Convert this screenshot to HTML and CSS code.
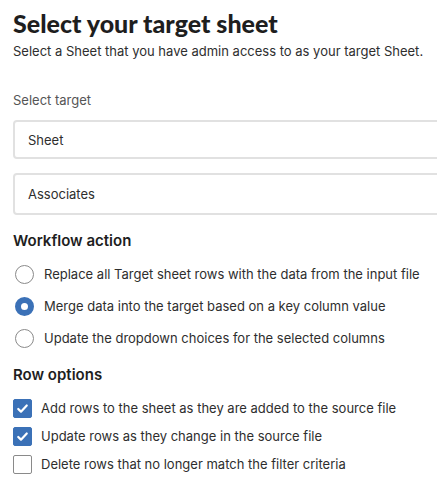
FILE: index.html
```html
<!DOCTYPE html>
<html lang="en">
<head>
    <meta charset="UTF-8">
    <meta name="viewport" content="width=device-width, initial-scale=1.0">
    <title>Select your target sheet</title>
    <link rel="stylesheet" href="styles.css">
</head>
<body>
    <div class="panel">
        <div class="panel-header">
            <h2>Select your target sheet</h2>
            <p>Select a Sheet that you have admin access to as your target Sheet.</p>
        </div>

        <div class="target-group">
            <label class="field-label">Select target</label>
            <div class="select-box">Sheet</div>
            <div class="select-box tall">Associates</div>
        </div>

        <div class="option-group">
            <h3>Workflow action</h3>
            <label class="radio-row">
                <span class="radio"></span>
                Replace all Target sheet rows with the data from the input file
            </label>
            <label class="radio-row">
                <span class="radio checked"></span>
                Merge data into the target based on a key column value
            </label>
            <label class="radio-row">
                <span class="radio"></span>
                Update the dropdown choices for the selected columns
            </label>
        </div>

        <div class="option-group rows">
            <h3>Row options</h3>
            <label class="check-row">
                <span class="checkbox checked">
                    <svg viewBox="0 0 20 20"><path d="M5 10.5l3.2 3.2L15 6.5" /></svg>
                </span>
                Add rows to the sheet as they are added to the source file
            </label>
            <label class="check-row">
                <span class="checkbox checked">
                    <svg viewBox="0 0 20 20"><path d="M5 10.5l3.2 3.2L15 6.5" /></svg>
                </span>
                Update rows as they change in the source file
            </label>
            <label class="check-row">
                <span class="checkbox"></span>
                Delete rows that no longer match the filter criteria
            </label>
        </div>
    </div>
</body>
</html>
```

FILE: styles.css
```css
* {
    margin: 0;
    padding: 0;
    box-sizing: border-box;
    font-family: 'Inter', 'Noto Sans', sans-serif;
}

:root {
    --blue: #3b71b7;
    --text: #2e2e2e;
    --gray-text: #555;
    --border: #e1e1e1;
    --control: #8a8a8a;
}

html, body {
    overflow: hidden;
}

body {
    background-color: #ffffff;
    color: var(--text);
}

.panel {
    width: 460px;
    padding: 8px 0 0 13px;
}

.panel-header h2 {
    font-family: 'Lato', sans-serif;
    font-size: 25px;
    font-weight: 900;
    line-height: 30px;
    color: #1e1e1e;
}

.panel-header p {
    font-size: 13px;
    line-height: 20px;
    margin-top: 3px;
}

.target-group {
    margin-top: 30px;
}

.field-label {
    display: block;
    font-size: 13px;
    color: var(--gray-text);
    line-height: 18px;
    margin-bottom: 11px;
}

.select-box {
    height: 39px;
    border: 2px solid var(--border);
    border-radius: 4px;
    padding-left: 13px;
    display: flex;
    align-items: center;
    font-size: 13px;
    margin-bottom: 14px;
}

.select-box.tall {
    height: 42px;
}

.option-group {
    margin-top: 16px;
}

.option-group h3 {
    font-size: 15px;
    font-weight: 600;
    line-height: 20px;
    color: #1e1e1e;
    margin-bottom: 7px;
}

.radio-row,
.check-row {
    display: flex;
    align-items: center;
    font-size: 13px;
    height: 32px;
}

.radio {
    width: 19px;
    height: 19px;
    border: 1.5px solid var(--control);
    border-radius: 50%;
    margin: 0 10px 0 2px;
    flex-shrink: 0;
}

.radio.checked {
    border: 6px solid var(--blue);
    background-color: #fff;
}

.option-group.rows {
    margin-top: 11px;
}

.option-group.rows h3 {
    margin-bottom: 9px;
}

.check-row {
    height: 28px;
}

.checkbox {
    width: 19px;
    height: 19px;
    border: 1.5px solid var(--control);
    border-radius: 2px;
    margin-right: 9px;
    flex-shrink: 0;
    display: flex;
}

.checkbox.checked {
    background-color: var(--blue);
    border-color: var(--blue);
}

.checkbox svg {
    width: 100%;
    height: 100%;
    fill: none;
    stroke: #fff;
    stroke-width: 2.6;
    stroke-linecap: round;
    stroke-linejoin: round;
}
```
